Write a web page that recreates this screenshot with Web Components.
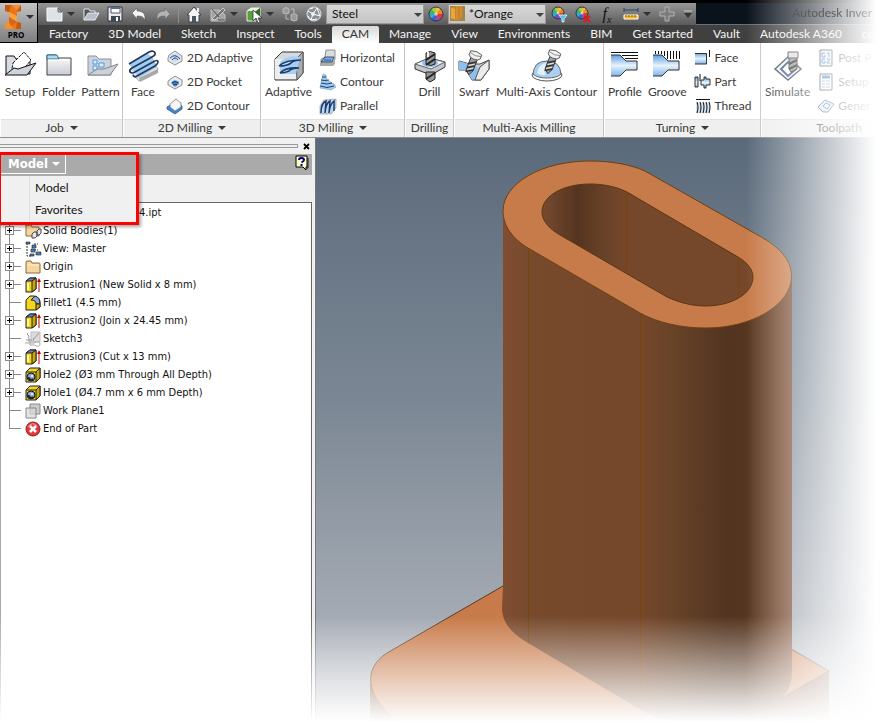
<!DOCTYPE html>
<html lang="en">
<head>
<meta charset="utf-8">
<title>Autodesk Inventor</title>
<style>
html, body { height: 100%; margin: 0; background: #fff; overflow: hidden; }
body { font: 12px/16px Lato, "Open Sans", sans-serif; color: #3a3a3a; }
</style>
</head>
<body>
<inv-app></inv-app>
<script>
const wheel = (cx, cy, r) => {
  const cols = ['#f2c230', '#f08a24', '#e03c2c', '#a04ab0', '#3c62d0', '#38a8d8', '#3cb45a', '#a8cc3c'];
  let s = '';
  cols.forEach((c, i) => {
    const a = i * Math.PI / 4 - Math.PI / 2, b = a + Math.PI / 4;
    s += `<path fill="${c}" d="M${cx} ${cy}L${(cx + r * Math.cos(a)).toFixed(2)} ${(cy + r * Math.sin(a)).toFixed(2)}A${r} ${r} 0 0 1 ${(cx + r * Math.cos(b)).toFixed(2)} ${(cy + r * Math.sin(b)).toFixed(2)}Z"/>`;
  });
  return s + `<circle cx="${cx}" cy="${cy}" r="${r}" fill="none" stroke="#334" stroke-width="1"/><circle cx="${cx}" cy="${cy}" r="${r / 4}" fill="#fff" opacity=".6"/>`;
};
const defs = `<defs><linearGradient id="b" x1="0" y1="0" x2="0" y2="1"><stop offset="0" stop-color="#5c9fe0"/><stop offset=".5" stop-color="#e8f2fc"/><stop offset="1" stop-color="#7fb4ea"/></linearGradient><linearGradient id="g" x1="0" y1="0" x2="0" y2="1"><stop offset="0" stop-color="#fff"/><stop offset="1" stop-color="#c9ccd2"/></linearGradient></defs>`;
const screw = '<path d="M-4-7h8v14l-3 6-5-4z" fill="#a0a0a0" stroke="#333"/><path d="M-4 1l8-5M-4 6l8-5M-4 11l8-5" stroke="#333" stroke-width="2"/><path d="M-3 3l6-4M-3 8l6-4" stroke="#eee"/><path d="M-7-14q7-3 14 0v5q-2 3-7 3t-7-3z" fill="#f0f0f0" stroke="#555"/><path d="M-7-12q7 3 14 0" stroke="#888"/>';
const extrude = '<path d="M1 4l4-3h6v11l-4 3H1z" fill="#f4d71c" stroke="#222"/><path d="M1 4l4-3h6L7 4z" fill="#6a7fd0" stroke="#222"/><path d="M7 4l4-3v11l-4 3z" fill="#c9a800" stroke="#222"/><path d="M3 6v7" stroke="#fff8a0" stroke-width="2"/><path d="M14 15V3" stroke="#c80000"/><path d="M12 5l2-4 2 4z" fill="#c80000"/>';
const hole = '<path d="M1 5l4-4h10v10l-4 4H1z" fill="#f4d71c" stroke="#222"/><path d="M11 5l4-4v10l-4 4z" fill="#c9a800" stroke="#222"/><path d="M1 5h10" stroke="#222"/><circle cx="6" cy="10" r="4" fill="#8fa6d8" stroke="#111"/><path d="M3.500 10a3 3 0 0 0 5 2" stroke="#223" stroke-width="2" fill="none"/><circle cx="7" cy="9" r="1" fill="#fff"/>';
const ICONS = {
  new: [16, '<path d="M0 2h11l4 4v9H0z" fill="#dfe2e7" stroke="#f8f8f8"/><path d="M11 2v4h4z" fill="#aab" stroke="#667"/>'],
  open: [16, '<path d="M1 14V3h5l1 2h5v3" fill="#555" stroke="#e8eaee"/><path d="M1 14L5 7h11l-4 7z" fill="#b8c0cc" stroke="#e8eaee"/>'],
  save: [16, '<path d="M1 1h14v14H1z" fill="#e9ebee" stroke="#2c3440"/><path d="M4 1h9v6H4z" fill="#fff" stroke="#4a5566"/><path d="M4 2h9" stroke="#5a6c84" stroke-width="2"/><path d="M4 10h9v5H4z" fill="#3c4654"/><path d="M9 11h2v4H9z" fill="#fff"/>'],
  undo: [16, '<path d="M6 2v3c5 0 8 2 8 7v3c-1-4-3-5-8-5v3L1 7z" fill="#f6f6f6" stroke="#555" stroke-width=".6"/>'],
  redo: [16, '<path d="M10 2v3C5 5 2 7 2 12v3c1-4 3-5 8-5v3l5-5z" fill="#b4b4b4" stroke="#666" stroke-width=".6"/>'],
  home: [16, '<path d="M1 9l7-8 7 8h-2v7H3V9z" fill="#f4f5f7" stroke="#3b4350"/><path d="M12 2v4" stroke="#eee" stroke-width="2"/><path d="M6 10h4v6H6z" fill="#4c5462"/>'],
  sk: [16, '<path d="M1 4h9l5 5v6H1z" fill="#a4a4a4" stroke="#c4c4c4"/><path d="M2 13L13 2l2 2L5 14z" fill="#777" stroke="#ccc"/><path d="M2 3l7 8M8 14h7" stroke="#555"/>'],
  sel: [16, '<path d="M1 5l4-3h9v9l-4 4H1z" fill="#5aa13c" stroke="#e4f0e0"/><path d="M1 5l4-3h9l-3 3z" fill="#e8f4e4"/><path d="M10 5l4-3v9l-4 4z" fill="#2f6e1c"/><path d="M7 4v11l3-3 2 5 2-1-2-4h4z" fill="#fff" stroke="#333" stroke-width=".8"/>'],
  link: [16, '<path d="M1 3q3-3 6 0v4q-3 2-6 0zM9 9q3-3 6 0v5q-3 2-6 0z" fill="#9a9a9a" stroke="#bbb"/><path d="M4 9v4h3M9 3h3v4" stroke="#bbb" fill="none"/>'],
  globe: [16, '<circle cx="8" cy="8" r="7" fill="#8a9098" stroke="#e4e4e4"/><path d="M2 5l5 3 4-6M7 8l-2 6M7 8l7 2M11 2l3 8M2 10l3 4 6-1M4 3l3-1" stroke="#fff" fill="none"/><circle cx="7" cy="8" r="2" fill="#eee"/>'],
  wheel: [16, wheel(8, 8, 7)],
  wheelf: [16, wheel(7, 7, 6) + '<path d="M8 9h8l-3 4v3h-2v-3z" fill="#3cc3f4" stroke="#fff" stroke-width=".7"/>'],
  wheelx: [16, wheel(7, 7, 6) + '<path d="M9 10l6 6M15 10l-6 6" stroke="#e01818" stroke-width="2"/>'],
  measure: [16, '<path d="M1 4h14M1 2v4M15 2v4" stroke="#2e4468"/><path d="M1 9h14v4H1z" fill="#f6b820" stroke="#fff"/><path d="M3 9v2M6 9v2M9 9v2M12 9v2" stroke="#7a4a00"/>'],
  plus: [16, '<path d="M6 1h4v5h5v4h-5v5H6v-5H1V6h5z" fill="#7c7c7c" stroke="#b4b4b4"/>'],
  more: [10, '<path d="M1 2h8" stroke="#ccc"/><path d="M1 4h8L5 9z" fill="#333"/>'],
  swatch: [15, '<path d="M0 0h15v15H0z" fill="#a8824c"/><path d="M1 2l4-2h7v12l-5 2-6-1z" fill="#d08f2e"/><path d="M5 0v12M9 1v12" stroke="#b87a20"/><path d="M1 2l4 1v10l-4-1z" fill="#e8a83c"/>'],
  logo: [26, '<path d="M5 1h16v6l-4 1v10l4 1v6H5v-6l4-1V8L5 7z" fill="#e8761a"/><path d="M5 1h6l-2 7-4-1zM17 8l4-1V1zM17 18l4 1v6h-5z" fill="#c9580f"/><path d="M9 8l8 4v6l-8-5z" fill="#f7a13c"/><path d="M5 19l4-1 5 7H5zM12 1h9l-5 5z" fill="#f59030"/><path d="M9 13l8 5-6 4-2-4z" fill="#d8661a"/>'],
  setup: [32, '<path d="M2 24V6h8l2 3h14v15z" fill="#d8dbe2" stroke="#111"/><path d="M9 13L20 2l7 8-10 12-9-3z" fill="#fff" stroke="#111" stroke-dasharray="3 1"/><path d="M8 18l3 4" stroke="#4d9fe0" stroke-width="3"/><path d="M1 25l9-7 4 1 18-6-9 12z" fill="#cfd3dc" stroke="#111"/>'],
  folder: [32, '<path d="M4 25V5h9l2 3h13v17z" fill="url(#g)" stroke="#3e4247"/><path d="M4 5h10l2 4H4z" fill="#a6dcf4" stroke="#3e6c84"/><path d="M5 10h22" stroke="#fff"/>'],
  pattern: [32, '<path d="M3 25V6h8l3 3h12v16z" fill="#cdd3da" stroke="#8a9098"/><path d="M8 10h4v4H8zM8 16h4v4H8zM14 13h5v4h-5zM8 22h5" fill="#dcecfa" stroke="#4d9be0"/><path d="M3 25l9-6h7l14-5-8 11z" fill="#ccd1d8" stroke="#808690"/>'],
  face: [32, '<path d="M2 20L24 6l7 13-19 12z" fill="#e6e6e6" stroke="#aaa"/><path d="M2 14L21 3l9 14-18 11z" fill="#9fcdf2"/><path d="M31 19v4L13 32l-1-4z" fill="#a8a8a8"/><g fill="none" stroke="#24385e" stroke-width="1.700"><path d="M2 14L22 2q5-2 6 1 1 2-3 4L5 18q-3 2-2 4 2 2 5 0L26 12q5-3 5 0 0 2-3 4L10 26q-3 2-4-1"/></g>'],
  adap2: [16, '<path d="M1 8l1-3 6-4 7 5v5l-7 4-7-4z" fill="#e4e7ea" stroke="#777" stroke-width=".8"/><path d="M3 9q1-5 6-5 4 1 4 4l-5 4z" fill="#c2daf2"/><path d="M3 8q5-5 10 1M5 10q3-4 6 0" fill="none" stroke="#264a80"/>'],
  pock: [16, '<path d="M1 7l7-5 7 4v5l-7 4-7-4z" fill="#e8eaec" stroke="#777" stroke-width=".8"/><path d="M4 9q3-5 8-1v2l-4 3z" fill="#4f8fd4"/><path d="M5 9q3-3 6 0M6 11q2-2 4 0" fill="none" stroke="#16345e"/>'],
  cont2: [16, '<path d="M0 9l8-5 7 4v3l-7 5-8-5z" fill="#3d86d0" stroke="#2a5c96" stroke-width=".8"/><path d="M3 6l6-5 5 4v4l-6 4-5-4z" fill="#f6f6f6" stroke="#777" stroke-width=".8"/>'],
  adap3: [32, '<path d="M2 9l7-7h21v21l-6 7H2z" fill="#d7dadd" stroke="#333"/><path d="M2 9h21v20H2z" fill="#eceef0"/><path d="M23 9l7-7v21l-6 7z" fill="#a8adb4" stroke="#555"/><path d="M7 12q8-8 20-5l-4 17H7z" fill="#a6d0f4"/><path d="M6 16q6-6 22-6-7 0-10 3-4 3-12 3M7 23q6-6 19-5-7 0-10 3-4 2-9 2" fill="#cfe5f9" stroke="#1f3d6e" stroke-width="1.600"/>'],
  horiz: [16, '<path d="M6 0h9v9l-2 4H1v-4l4-2z" fill="#d9dcdf" stroke="#777" stroke-width=".8"/><path d="M5 7h9l-2 5H1z" fill="#7eb2e6" stroke="#234" stroke-width=".8"/><path d="M4 10h7" stroke="#245a9c"/><path d="M0 13h13l2-3v4l-2 2H0z" fill="#aaa"/>'],
  cont3: [16, '<path d="M3 0l3 1 1 5 7 4 2 3-5 3-11-2 1-5z" fill="#9ccaf0" stroke="#9aa" stroke-width=".7"/><path d="M2 3h4M1 6q4 1 8 0M1 9q6 2 11 0M0 12q7 3 14 0" stroke="#1f4478" fill="none"/>'],
  para: [16, '<path d="M0 8l4-6 12-1v9l-5 6H0z" fill="#bcd8f0" stroke="#999" stroke-width=".7"/><path d="M1 15q0-10 5-12 0 0-1 12 1-10 5-12 0 1-1 12 1-9 5-12v10" fill="none" stroke="#1f3d6e" stroke-width="1.500"/>'],
  drill: [32, '<path d="M1 14l14-6 16 4v5l-14 8-16-6z" fill="#c3c7cc" stroke="#333"/><path d="M1 14l14-6 16 4-14 7z" fill="#eef0f2" stroke="#666"/><ellipse cx="16" cy="13" rx="8" ry="4" fill="#8ec1f0"/><path d="M12 3q4-3 9 0v11q-4 3-9 0zM12 22h9v7l-5 3-4-3z" fill="#999" stroke="#222"/><path d="M12 10l9-6M12 15l9-6M12 29l9-6" stroke="#222" stroke-width="2"/><path d="M14 2v5" stroke="#eee" stroke-width="2"/>'],
  swarf: [32, '<path d="M1 11l11 3h10l9-4v9l-8 11h-9L8 20H1z" fill="#c9ccd0" stroke="#444"/><path d="M1 11l13 4 9 5-5 8-4 2-6-10H1z" fill="#8cc0ee"/><path d="M22 17l9-7v9l-8 11h-6z" fill="#e9ebed" stroke="#555"/><g transform="translate(14 14) rotate(21) scale(.85)">' + screw + '</g>'],
  multi: [32, '<ellipse cx="16" cy="25" rx="15" ry="6" fill="#fff" stroke="#555"/><path d="M2 24q1-13 14-13t14 13q-4 4-14 4T2 24z" fill="#a9d0f2" stroke="#666"/><path d="M6 23q2-9 9-10l-1 12q-6 0-8-2z" fill="#e4f1fc"/><g transform="translate(20 13) rotate(21) scale(.85)">' + screw + '</g>'],
  profile: [32, '<path d="M2 5h9l6 6h11v9H17l-6 6H2z" fill="url(#b)"/><path d="M2 26h9l6-6h11v-9H17l-6-6H2" fill="none" stroke="#333"/><path d="M2 2.500h27M13 5.500h16M16 8.500h13" stroke="#111"/>'],
  groove: [32, '<path d="M2 5h9l6 6h11v9H17l-6 6H2z" fill="url(#b)"/><path d="M2 26h9l6-6h11v-9H17l-6-6H2" fill="none" stroke="#333"/><path d="M4.500 1v3M7.500 1v3M10.500 1v3M13.500 1v5M16.500 1v8M19.500 1v8M22.500 1v8M25.500 1v8M28.500 1v8" stroke="#111"/>'],
  tface: [16, '<path d="M0 3h12v11H0z" fill="url(#b)"/><path d="M0 3.500h11.500V14H0" fill="none" stroke="#333"/><path d="M14.500 0v7" stroke="#111"/>'],
  tpart: [16, '<path d="M0 3h3v10H0zM6 6h3V3h2v2h4v6h-4v3H9v-3H6z" fill="url(#b)" stroke="#333"/><path d="M5 0v7" stroke="#111"/>'],
  thread: [16, '<path d="M1 1.500h14" stroke="#111"/><path d="M1 5h14v10H1z" fill="#d7e6f4"/><path d="M2 4q2 5 0 11M5 4q2 5 0 11M8 4q2 5 0 11M11 4q2 5 0 11M14 4q2 5 0 11" stroke="#222" fill="none" stroke-width="1.100"/>'],
  sim: [32, '<path d="M3 19l13-12 13 12-13 11z" fill="#f4f6f8" stroke="#444e60" stroke-width="1.500"/><path d="M9 19l7-7 8 7-8 7z" fill="#fff" stroke="#3d5a88" stroke-width="2"/><path d="M17 7h8v12l-6 3-2-3z" fill="#9a9a9a" stroke="#333"/><path d="M16 2h10v6H16z" fill="#ddd" stroke="#444"/><path d="M17 14l8-4M17 19l8-4" stroke="#333" stroke-width="2"/>'],
  post: [16, '<path d="M2 0h12v16H2z" fill="#e4eefa" stroke="#333"/><path d="M7 3H4v4h3V5M9 3h2v4M7 9H4v4h3v-2M9 9h3l-3 4h3" fill="none" stroke="#2c74c8"/>'],
  sheet: [16, '<path d="M2 0h12v16H2z" fill="#fff" stroke="#333"/><path d="M4 3h8" stroke="#2c74c8" stroke-width="3"/><path d="M4 7h3M8 7h4M4 10h3M8 10h4M4 13h3M8 13h4" stroke="#69b"/>'],
  gen: [16, '<path d="M0 9l7-7 9 4-6 8-5 0z" fill="#d4e6f8" stroke="#557"/><path d="M5 8l3-3 4 2-3 4z" fill="#fff" stroke="#2c74c8"/>'],
  bodies: [16, '<path d="M1 13V2h5l1 2h7v9z" fill="#f5d6a0" stroke="#8a6a3c"/><path d="M7 11l2-2h3v4l-2 2H7zM12 8l2-2h2v4l-2 2h-2z" fill="#e6e6e6" stroke="#444"/>'],
  view: [16, '<path d="M2 2v13h4M9 3h4M9 9h4" stroke="#333" stroke-dasharray="2 1"/><path d="M1 1h4v2H1zM7 4h4v3H7zM6 8h4v3H6zM11 11h5v3h-5zM5 13h4v2H5z" fill="#4a7cb8" stroke="#222" stroke-width=".6"/>'],
  origin: [16, '<path d="M1 14V3q0-1 1-1h4l1 2h7q1 0 1 1v9z" fill="#f5d6a0" stroke="#8a6a3c"/><path d="M2 6h12" stroke="#fff0d0"/>'],
  extrude: [16, extrude],
  fillet: [16, '<path d="M1 5l4-4h4q6 1 6 7v4l-4 3H1z" fill="#f4d71c" stroke="#222"/><path d="M6 5l4-4q5 1 5 8l-4 0q0-4-5-4z" fill="#8fa6d8" stroke="#222"/><path d="M11 9h4v3l-4 3z" fill="#c9a800" stroke="#222"/>'],
  sketch: [16, '<path d="M6 1h9v10H6z" fill="#dcdcdc" stroke="#bbb"/><path d="M3 2q-2 1 0 2t0 3M1 9h6M4 7v4M8 9l6-7M8 10l1-3" stroke="#999" fill="none"/><path d="M0 12h9q6-3 6 1t-6 1H5v-4" stroke="#aaa" fill="none"/>'],
  hole: [16, hole],
  plane: [16, '<path d="M5 1h10v10H5z" fill="#ccc" stroke="#888"/><path d="M1 5h10v10H1z" fill="#d9d9d9" fill-opacity=".7" stroke="#888"/>'],
  end: [16, '<circle cx="8" cy="8" r="7" fill="#e23a3a" stroke="#8a1c1c"/><path d="M3 6q4-6 9-1" stroke="#f8a0a0" fill="none"/><path d="M5 5l6 6M11 5l-6 6" stroke="#fff" stroke-width="2.500"/>'],
  caret: [8, '<path d="M0 2h8L4 6z" fill="currentColor"/>'],
  close: [8, '<path d="M1 2l5 5M6 2L1 7" stroke="#000" stroke-width="1.800"/>'],
  help: [16, '<path d="M2 1h11v11h-1v3l-3-3H2z" fill="#ffffc8" stroke="#000"/><path d="M5 5q0-2 2.500-2t2.500 2q0 1-2.500 2.500M7.500 9v2" fill="none" stroke="#000080" stroke-width="2"/><path d="M14 3v10h-2" stroke="#222" fill="none"/>']
};

const define = (name, css, html) => customElements.define(name, class extends HTMLElement {
  connectedCallback() {
    if (this.shadowRoot) return;
    const body = typeof html === 'function' ? html(this) : html;
    this.attachShadow({ mode: 'open' }).innerHTML = `<style>*{box-sizing:border-box}button{font:inherit;color:inherit;background:none;border:0;margin:0;padding:0}${css}</style>${body}`;
  }
});
const at = (el, n, d = '') => el.getAttribute(n) ?? d;

define('inv-icon', ':host{display:inline-flex;flex:none}svg{display:block;overflow:visible}', el => {
  const [n, art] = ICONS[at(el, 'name')];
  return `<svg width="${n}" height="${n}" viewBox="0 0 ${n} ${n}" fill="none" aria-hidden="true">${art.includes('url(#') ? defs : ''}${art}</svg>`;
});

define('qat-button', ':host{display:flex;flex:none}button{display:flex;align-items:center;gap:4px;color:#333}', el =>
  `<button aria-label="${at(el, 'label')}"><inv-icon name="${at(el, 'icon')}"></inv-icon>${el.hasAttribute('split') ? '<inv-icon name="caret"></inv-icon>' : ''}</button>`);

define('qat-select', `:host{display:flex;position:relative;width:98px;height:20px;flex:none;color:#111}
  select{appearance:none;width:100%;height:100%;border:1px solid #999;border-radius:0;background:linear-gradient(#d8d8d8,#c4c4c4);font:inherit;color:inherit;padding:0 16px 0 5px}
  :host([icon]) select{padding-left:20px}
  .s{position:absolute;left:2px;top:2px}.c{position:absolute;right:2px;top:7px;color:#444}`, el =>
  `<select aria-label="${at(el, 'label')}"><option>${at(el, 'value')}</option></select>${el.hasAttribute('icon') ? '<inv-icon class="s" name="swatch"></inv-icon>' : ''}<inv-icon class="c" name="caret"></inv-icon>`);

define('app-menu', `:host{display:block;grid-row:1/3}
  button{width:100%;height:100%;display:grid;grid-template-columns:26px 8px;align-content:start;align-items:center;background:linear-gradient(#c4c4c4,#7e7e7e);border:1px solid #000;border-width:0 1px 1px 0;padding:1px 2px 0 0;color:#2c3440}
  span{font:bold 8px/10px "Open Sans",sans-serif;color:#000;text-align:center;padding-left:6px}`,
  '<button aria-label="Application menu"><inv-icon name="logo"></inv-icon><inv-icon name="caret"></inv-icon><span>PRO</span></button>');

define('quick-bar', `:host{display:flex;align-items:center;min-width:0;background:linear-gradient(#969696,#5a5a5a)}
  div{display:flex;align-items:center;gap:8px}.a{padding-left:9px}i{width:1px;height:18px;background:#8f8f8f;margin:0 7px}
  .m{gap:4px;padding:0 5px 0 4px}.z{padding-right:3px}
  .fx{font:italic 16px/18px "Liberation Serif",serif;width:16px;color:#111}.fx sub{font-size:10px;line-height:0}`,
  `<div class="a"><qat-button icon="new" label="New" split></qat-button><qat-button icon="open" label="Open"></qat-button><qat-button icon="save" label="Save"></qat-button><qat-button icon="undo" label="Undo"></qat-button><qat-button icon="redo" label="Redo"></qat-button></div><i></i>
  <div><qat-button icon="home" label="Home"></qat-button><qat-button icon="sk" label="Sketch" split></qat-button><qat-button icon="sel" label="Select" split></qat-button><qat-button icon="link" label="Link"></qat-button><qat-button icon="globe" label="Material"></qat-button></div>
  <div class="m"><qat-select label="Material" value="Steel"></qat-select><qat-button icon="wheel" label="Appearance"></qat-button><qat-select label="Appearance" value="*Orange" icon></qat-select></div>
  <div class="z"><qat-button icon="wheelf" label="Adjust"></qat-button><qat-button icon="wheelx" label="Clear"></qat-button><button class="fx" aria-label="Parameters">f<sub>x</sub></button><qat-button icon="measure" label="Measure" split></qat-button><qat-button icon="plus" label="Add"></qat-button><qat-button icon="more" label="Customize"></qat-button></div>`);

define('title-text', `:host{display:flex;justify-content:flex-end;min-width:0;background:#0a121c;border-bottom:1px solid #66707a}
  span{position:relative;z-index:2;padding:2px 8px 0 0;white-space:nowrap;color:#5c5c5c;-webkit-mask-image:linear-gradient(90deg,#000 50%,rgba(0,0,0,.1));mask-image:linear-gradient(90deg,#000 50%,rgba(0,0,0,.1))}`, '<span><slot></slot></span>');

define('ribbon-tabs', `:host{display:flex;grid-column:2/4;min-width:0;overflow:hidden;background:#404040;color:#f4f4f4;padding-left:1px}
  a{color:inherit;text-decoration:none;white-space:nowrap;padding:1px 10px 0;flex:none}
  a[aria-current]{background:linear-gradient(#d8d8d8,#fff);color:#333;margin-top:1px;padding-top:0;border-radius:2px 2px 0 0}`,
  () => ['Factory', '3D Model', 'Sketch', 'Inspect', 'Tools', 'CAM', 'Manage', 'View', 'Environments', 'BIM', 'Get Started', 'Vault', 'Autodesk A360', 'cog'].map(t => `<a href="#"${t === 'CAM' ? ' aria-current="page"' : ''}>${t}</a>`).join(''));

define('app-header', ':host{display:grid;grid-template-columns:38px auto minmax(0,1fr);grid-template-rows:22px 18px;border-top:3px solid #000}',
  '<app-menu></app-menu><quick-bar></quick-bar><title-text>Autodesk Inver</title-text><ribbon-tabs></ribbon-tabs>');

define('big-button', ':host{display:block;flex:none}:host([center]){margin:0 auto}button{display:flex;flex-direction:column;align-items:center;gap:2px;line-height:16px;white-space:nowrap;min-width:30px}', el =>
  `<button><inv-icon name="${at(el, 'icon')}"></inv-icon><slot></slot></button>`);
define('small-button', ':host{display:block}button{display:flex;align-items:center;gap:4px;height:24px;white-space:nowrap}', el =>
  `<button><inv-icon name="${at(el, 'icon')}"></inv-icon><slot></slot></button>`);
define('ribbon-panel', `:host{display:flex;flex-direction:column;min-width:0;overflow:hidden;border-right:1px solid #c6c6c6}
  :host([open-end]){border-right:0}:host([open-end]) .l{padding-left:36px}
  .t{display:flex;align-items:flex-start;gap:6px;flex:1;padding:7px 3px 0 4px}
  ::slotted(div){margin:-4px 0 0 2px}
  .l{height:18px;background:#efefef;border-top:1px solid #e0e0e0;display:flex;justify-content:center;align-items:center;margin-left:1px;padding-bottom:1px}
  .l button{display:flex;align-items:center;gap:6px;white-space:nowrap}`, el =>
  `<div class="t"><slot></slot></div><div class="l">${el.hasAttribute('menu') ? `<button>${at(el, 'label')}<inv-icon name="caret"></inv-icon></button>` : `<span>${at(el, 'label')}</span>`}</div>`);
define('inv-ribbon', `:host{display:grid;height:95px;background:#fff;border-bottom:1px solid #8e8e8e;
  grid-template-columns:minmax(0,123fr) minmax(0,138fr) minmax(0,144fr) minmax(0,49fr) minmax(0,150fr) minmax(0,157fr) minmax(0,119fr)}`,
  `<ribbon-panel label="Job" menu><big-button icon="setup">Setup</big-button><big-button icon="folder">Folder</big-button><big-button icon="pattern">Pattern</big-button></ribbon-panel>
  <ribbon-panel label="2D Milling" menu><big-button icon="face">Face</big-button><div><small-button icon="adap2">2D Adaptive</small-button><small-button icon="pock">2D Pocket</small-button><small-button icon="cont2">2D Contour</small-button></div></ribbon-panel>
  <ribbon-panel label="3D Milling" menu><big-button icon="adap3">Adaptive</big-button><div><small-button icon="horiz">Horizontal</small-button><small-button icon="cont3">Contour</small-button><small-button icon="para">Parallel</small-button></div></ribbon-panel>
  <ribbon-panel label="Drilling"><big-button icon="drill" center>Drill</big-button></ribbon-panel>
  <ribbon-panel label="Multi-Axis Milling"><big-button icon="swarf">Swarf</big-button><big-button icon="multi">Multi-Axis Contour</big-button></ribbon-panel>
  <ribbon-panel label="Turning" menu><big-button icon="profile">Profile</big-button><big-button icon="groove">Groove</big-button><div><small-button icon="tface">Face</small-button><small-button icon="tpart">Part</small-button><small-button icon="thread">Thread</small-button></div></ribbon-panel>
  <ribbon-panel label="Toolpath" open-end><big-button icon="sim">Simulate</big-button><div><small-button icon="post">Post P</small-button><small-button icon="sheet">Setup</small-button><small-button icon="gen">Gener</small-button></div></ribbon-panel>`);

define('tree-row', `:host{display:flex;align-items:center;height:18px;padding-left:5px;white-space:nowrap}
  .x{flex:none;overflow:visible}inv-icon{margin-right:2px}`, el => {
  const leaf = at(el, 'kind') === 'leaf', last = at(el, 'icon') === 'end';
  return `<svg class="x" width="19" height="18" viewBox="1 1 19 18" fill="none" shape-rendering="crispEdges" aria-hidden="true"><path d="M4.500 1V${last ? 9.5 : 19}M4 9.500h12" stroke="#888"/>${leaf ? '' : '<path d="M.5 5.500h8v8h-8z" fill="#fff" stroke="#888"/><path d="M2 9.500h5M4.500 7v5" stroke="#000"/>'}</svg><inv-icon name="${at(el, 'icon')}"></inv-icon><slot></slot>`;
});

define('browser-menu', `:host{position:absolute;left:-2px;top:14px;width:141px;height:73px;border:3px solid #f00;background:#f0f0f0;box-shadow:2px 2px 3px rgba(0,0,0,.35);display:block;color:#111}
  .h{height:21px;background:#aaa}
  .h button{display:flex;align-items:center;gap:4px;height:19px;width:65px;padding-left:7px;border:1px solid #fff;border-width:0 1px 1px 0;color:#fff;font:bold 13px/16px "DejaVu Sans Condensed","DejaVu Sans",sans-serif}
  .i{display:flex;flex-direction:column;margin-left:28px;padding-top:1px;border-left:1px solid #dcdcdc}
  .i button{height:22px;text-align:left;padding-left:5px}`,
  '<div class="h"><button aria-haspopup="menu">Model<inv-icon name="caret"></inv-icon></button></div><div class="i" role="menu"><button role="menuitem">Model</button><button role="menuitem">Favorites</button></div>');

define('model-browser', `:host{display:flex;flex-direction:column;position:relative;background:#f0f0f0;border-right:1px solid #777;padding-right:3px}
  .g{height:16px;display:flex;align-items:center;gap:5px;padding-right:1px}
  .g i{flex:1;height:4px;border:1px solid #999;border-left:0}
  .b{height:21px;background:#aaa;display:flex;justify-content:flex-end;align-items:center;padding-right:2px}
  .t{flex:1;margin-top:27px;background:#fff;border:1px solid #666;border-left-color:#aaa;padding-top:1px;min-height:0;overflow:hidden;color:#111;font:11px/16px "DejaVu Sans Condensed","DejaVu Sans",sans-serif}
  .r{height:18px;padding:1px 0 0 138px}`,
  `<div class="g"><i></i><button aria-label="Close"><inv-icon name="close"></inv-icon></button></div>
  <div class="b"><button aria-label="Help"><inv-icon name="help"></inv-icon></button></div>
  <div class="t"><div class="r">4.ipt</div>
  <tree-row icon="bodies">Solid Bodies(1)</tree-row><tree-row icon="view">View: Master</tree-row><tree-row icon="origin">Origin</tree-row>
  <tree-row icon="extrude">Extrusion1 (New Solid x 8 mm)</tree-row><tree-row icon="fillet" kind="leaf">Fillet1 (4.5 mm)</tree-row>
  <tree-row icon="extrude">Extrusion2 (Join x 24.45 mm)</tree-row><tree-row icon="sketch" kind="leaf">Sketch3</tree-row>
  <tree-row icon="extrude">Extrusion3 (Cut x 13 mm)</tree-row><tree-row icon="hole">Hole2 (Ø3 mm Through All Depth)</tree-row>
  <tree-row icon="hole">Hole1 (Ø4.7 mm x 6 mm Depth)</tree-row><tree-row icon="plane" kind="leaf">Work Plane1</tree-row><tree-row icon="end" kind="leaf">End of Part</tree-row></div>
  <browser-menu></browser-menu>`);

define('model-view', ':host{display:block;min-width:0;overflow:hidden;background:linear-gradient(#5b6a7b,#7b8794 45%,#a5abb4 82%,#b8bcc4)}svg{display:block;width:100%;height:100%}',
  `<svg viewBox="316 138 564 587" preserveAspectRatio="xMinYMin slice" role="img" aria-label="Part model">
  <defs><linearGradient id="o" gradientUnits="userSpaceOnUse" x1="503" y1="0" x2="792" y2="0"><stop offset="0" stop-color="#804d32"/><stop offset=".09" stop-color="#774a2c"/><stop offset=".48" stop-color="#75472b"/><stop offset=".6" stop-color="#664227"/><stop offset=".77" stop-color="#533420"/><stop offset=".83" stop-color="#54351f"/><stop offset="1" stop-color="#7a4a2e"/></linearGradient>
  <linearGradient id="i" gradientUnits="userSpaceOnUse" x1="542" y1="0" x2="626" y2="0"><stop offset="0" stop-color="#784a30"/><stop offset=".42" stop-color="#553520"/><stop offset=".8" stop-color="#6c432a"/><stop offset="1" stop-color="#76482b"/></linearGradient></defs>
  <path d="M370 683V740H829V671L640 560z" fill="#7a4a2e"/>
  <path d="M503 586L387 653C362 669 366 696 397 721L430 741H706L829 671 700 596z" fill="#c87b4a" stroke="#5c3a1c"/>
  <path d="M503 211V585L502 608C502 622 511 633 528 643L641 710C664 724 716 728 746 717C775 708 792 694 792 674V275z" fill="url(#o)"/>
  <path d="M528.500 247V643M640.500 313V710" stroke="#7a4308" fill="none"/>
  <path d="M503 211C503 183 542 161 590 161C612 161 632 165 645 171L763 238C782 249 791.500 262 791.500 276C791.500 305 752 328 706 328C682 328 658 323 640 313L528 248C513 239 503 226 503 211Z" fill="#c87b4a" stroke="#6e400f"/>
  <path d="M542 212C542 196 563 184 590 184C604 184 617 187 627 192L738 257C748 263 753 270 753 277C753 293 733 306 705 306C691 306 678 302 667 297L560 235C548 228 542 220 542 212Z" fill="url(#i)" stroke="#5c360f"/>
  <path d="M626.500 192V273M738.500 257V296" stroke="#7a4308" fill="none"/></svg>`);

define('inv-app', `:host{display:flex;flex-direction:column;height:100vh;position:relative;overflow:hidden}
  main{flex:1;min-height:0;display:grid;grid-template-columns:316px minmax(0,1fr)}
  .f{position:absolute;inset:0;z-index:1;pointer-events:none;background:linear-gradient(90deg,transparent calc(100% - 134px),#fff calc(100% - 4px)),linear-gradient(transparent calc(100% - 109px),#fff calc(100% - 3px))}
  `, '<app-header></app-header><inv-ribbon></inv-ribbon><main><model-browser></model-browser><model-view></model-view></main><div class="f"></div>');
</script>
</body>
</html>
